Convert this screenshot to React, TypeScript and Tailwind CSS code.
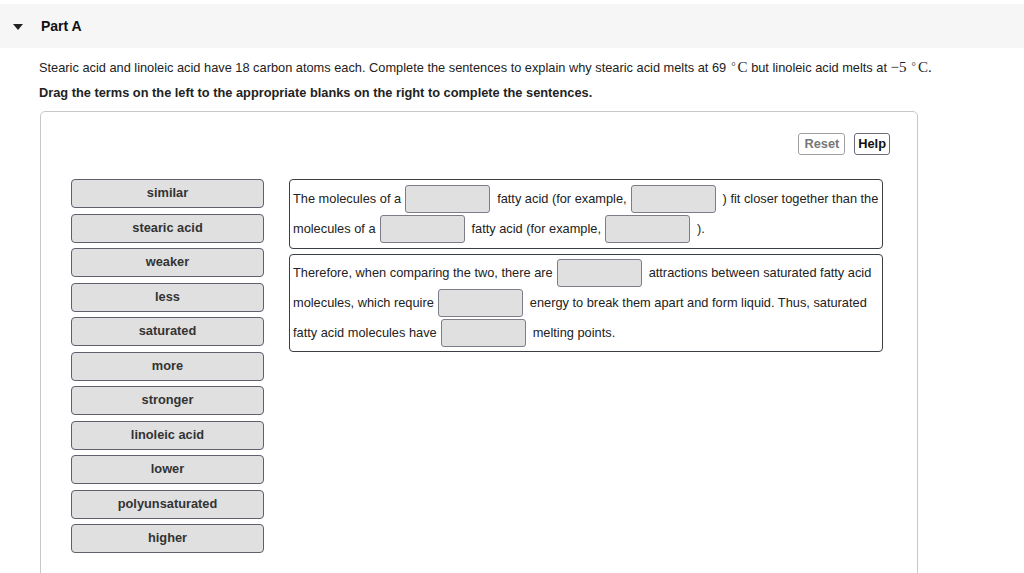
import React from "react";

const terms = [
  "similar",
  "stearic acid",
  "weaker",
  "less",
  "saturated",
  "more",
  "stronger",
  "linoleic acid",
  "lower",
  "polyunsaturated",
  "higher",
];

type Part = string | null;

const Blank = () => (
  <span className="inline-block w-[85px] h-[28px] ml-[4px] mr-[7px] bg-[#e0e0e0] border border-[#7d7d8a] rounded-[3px] shrink-0" />
);

const Line = ({ parts }: { parts: Part[] }) => (
  <div className="flex items-center h-[30px] whitespace-nowrap">
    {parts.map((p, i) =>
      p === null ? <Blank key={i} /> : <span key={i}>{p}</span>
    )}
  </div>
);

const serif = { fontFamily: '"Liberation Serif", "Times New Roman", serif' };

export default function App() {
  return (
    <div
      className="w-[1024px] h-[573px] overflow-hidden bg-white text-[#222]"
      style={{ fontFamily: '"Liberation Sans", Arial, sans-serif' }}
    >
      {/* Header */}
      <div className="pt-[4px]">
        <div className="h-[44px] bg-[#f6f6f6] flex items-center">
          <svg width="10" height="8" viewBox="0 0 10 8" className="ml-[13px] mt-[2px]">
            <polygon points="0,1 10,1 5,7" fill="#222" />
          </svg>
          <span className="ml-[18px] mt-[1px] text-[14px] font-bold text-[#111]">Part A</span>
        </div>
      </div>

      <div className="pl-[39px]">
        <p className="mt-[10px] text-[12.8px] leading-[18px]">
          Stearic acid and linoleic acid have 18 carbon atoms each. Complete the sentences to explain why stearic acid melts at 69
          <span className="text-[15px]" style={serif}>
            <sup className="ml-[5px] mr-[2px] text-[11px] relative top-[-2px]">°</sup>C
          </span>{" "}
          but linoleic acid melts at{" "}
          <span className="text-[15px]" style={serif}>
            <span className="mr-[1px]">−5</span>
            <sup className="ml-[4px] mr-[2px] text-[11px] relative top-[-2px]">°</sup>C.
          </span>
        </p>
        <p className="mt-[7px] text-[12.8px] leading-[18px] font-bold">
          Drag the terms on the left to the appropriate blanks on the right to complete the sentences.
        </p>

        {/* Outer box */}
        <div className="mt-[9px] ml-[1px] w-[878px] h-[480px] border border-[#c8c8c8] rounded-[5px] pt-[21px]">
          <div className="flex justify-end gap-[9px] pr-[27px]">
            <button className="h-[22px] px-[5px] border border-[#a0a0a0] rounded-[3px] bg-white text-[12.8px] font-bold text-[#777]">
              Reset
            </button>
            <button className="h-[22px] px-[3px] border border-[#6a6a78] rounded-[3px] bg-white text-[12.8px] font-bold text-[#111]">
              Help
            </button>
          </div>

          <div className="flex mt-[24px] pl-[30px]">
            <div className="flex flex-col gap-[5.5px] w-[193px]">
              {terms.map((t) => (
                <div
                  key={t}
                  className="h-[29px] flex items-center justify-center pb-[1px] bg-[#e0e0e0] border border-[#5f5f6e] rounded-[4px] text-[12.8px] font-bold text-[#333]"
                >
                  {t}
                </div>
              ))}
            </div>

            <div className="ml-[25px] flex flex-col gap-[5px] w-[594px] text-[12.8px] text-[#222]">
              <div className="border-[1.5px] border-[#3a3f44] rounded-[4px] pl-[3px] py-[4px]">
                <Line parts={["The molecules of a", null, "fatty acid (for example,", null, ") fit closer together than the"]} />
                <Line parts={["molecules of a", null, "fatty acid (for example,", null, ")."]} />
              </div>
              <div className="border-[1.5px] border-[#3a3f44] rounded-[4px] pl-[3px] py-[3px]">
                <Line parts={["Therefore, when comparing the two, there are", null, "attractions between saturated fatty acid"]} />
                <Line parts={["molecules, which require", null, "energy to break them apart and form liquid. Thus, saturated"]} />
                <Line parts={["fatty acid molecules have", null, "melting points."]} />
              </div>
            </div>
          </div>
        </div>
      </div>
    </div>
  );
}
